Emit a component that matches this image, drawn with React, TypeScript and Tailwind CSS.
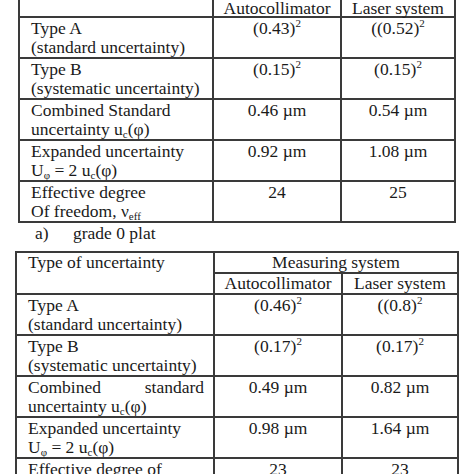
const cell = "border-2 border-[#3a3a3a] align-top p-0";

function Sq({ v }: { v: string }) {
  return (
    <span>
      {v}
      <sup className="text-[11px] -top-[7px]">2</sup>
    </span>
  );
}

function Uc() {
  return (
    <>
      u<sub className="text-[11px]">c</sub>(φ)
    </>
  );
}

function Up() {
  return (
    <>
      U<sub className="text-[11px]">φ</sub> = 2 <Uc />
    </>
  );
}

type Row = { label: React.ReactNode; a: React.ReactNode; b: React.ReactNode };

const first: Row[] = [
  { label: <>Type A<br />(standard uncertainty)</>, a: <Sq v="(0.43)" />, b: <Sq v="((0.52)" /> },
  { label: <>Type B<br />(systematic uncertainty)</>, a: <Sq v="(0.15)" />, b: <Sq v="(0.15)" /> },
  { label: <>Combined Standard<br />uncertainty <Uc /></>, a: "0.46 µm", b: "0.54 µm" },
  { label: <>Expanded uncertainty<br /><Up /></>, a: "0.92 µm", b: "1.08 µm" },
  {
    label: <>Effective degree<br />Of freedom, ν<sub className="text-[11px]">eff</sub></>,
    a: "24",
    b: "25",
  },
];

const second: Row[] = [
  { label: <>Type A<br />(standard uncertainty)</>, a: <Sq v="(0.46)" />, b: <Sq v="((0.8)" /> },
  { label: <>Type B<br />(systematic uncertainty)</>, a: <Sq v="(0.17)" />, b: <Sq v="(0.17)" /> },
  {
    label: (
      <>
        <span className="flex justify-between pr-[9px]">
          <span>Combined</span>
          <span>standard</span>
        </span>
        uncertainty <Uc />
      </>
    ),
    a: "0.49 µm",
    b: "0.82 µm",
  },
  { label: <>Expanded uncertainty<br /><Up /></>, a: "0.98 µm", b: "1.64 µm" },
  { label: <>Effective degree of<br />freedom</>, a: "23", b: "23" },
];

export default function App() {
  return (
    <div
      className="w-[474px] h-[474px] overflow-hidden bg-white text-[#1a1a1a] text-[17.5px] leading-[19px]"
      style={{ fontFamily: '"Liberation Serif", "Times New Roman", serif' }}
    >
      <table className="border-collapse ml-[18px] -mt-[2px] table-fixed">
        <colgroup>
          <col className="w-[194px]" />
          <col className="w-[128px]" />
          <col className="w-[114px]" />
        </colgroup>
        <tbody>
          <tr className="h-[16px] leading-[16px]">
            <td className={cell}></td>
            <td className={`${cell} text-center`}>Autocollimator</td>
            <td className={`${cell} text-center`}>Laser system</td>
          </tr>
          {first.map((r, i) => (
            <tr key={i} className="h-[40px]">
              <td className={`${cell} pl-[11px] pt-[1px]`}>{r.label}</td>
              <td className={`${cell} text-center pt-[1px]`}>{r.a}</td>
              <td className={`${cell} text-center pt-[1px]`}>{r.b}</td>
            </tr>
          ))}
        </tbody>
      </table>

      <div className="flex pl-[35px] pt-[1px] h-[28px]">
        <span className="w-[38px]">a)</span>
        <span>grade 0 plat</span>
      </div>

      <table className="border-collapse ml-[15px] table-fixed">
        <colgroup>
          <col className="w-[198px]" />
          <col className="w-[128px]" />
          <col className="w-[116px]" />
        </colgroup>
        <tbody>
          <tr className="h-[19px] leading-[19px]">
            <td rowSpan={2} className={`${cell} pl-[11px]`}>
              Type of uncertainty
            </td>
            <td colSpan={2} className={`${cell} text-center`}>
              Measuring system
            </td>
          </tr>
          <tr className="h-[19px] leading-[19px]">
            <td className={`${cell} text-center`}>Autocollimator</td>
            <td className={`${cell} text-center`}>Laser system</td>
          </tr>
          {second.map((r, i) => (
            <tr key={i} className="h-[40px]">
              <td className={`${cell} pl-[11px] pt-[1px]`}>{r.label}</td>
              <td className={`${cell} text-center pt-[1px]`}>{r.a}</td>
              <td className={`${cell} text-center pt-[1px]`}>{r.b}</td>
            </tr>
          ))}
        </tbody>
      </table>
    </div>
  );
}
